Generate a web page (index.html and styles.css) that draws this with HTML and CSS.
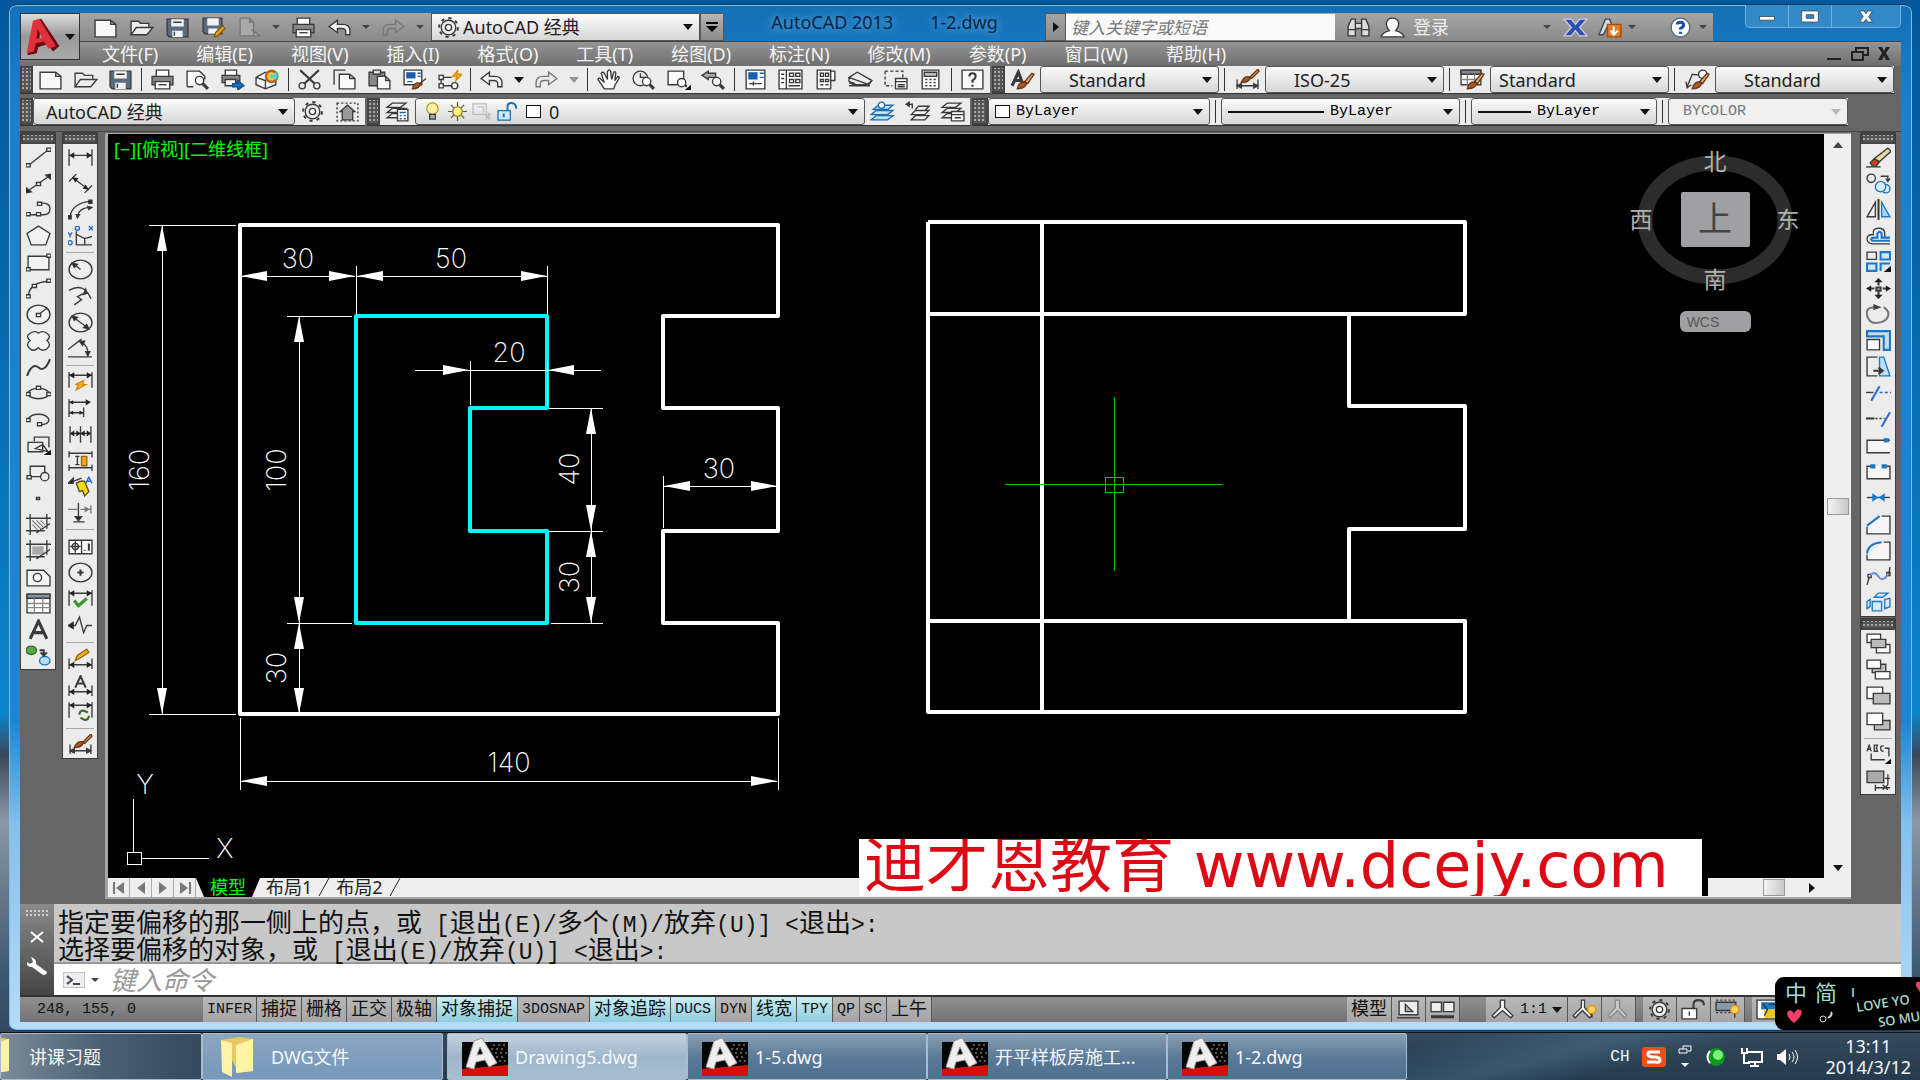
FILE: index.html
```html
<!DOCTYPE html>
<html lang="zh-CN">
<head>
    <meta charset="UTF-8">
    <title>AutoCAD 2013 1-2.dwg</title>
    <link rel="stylesheet" href="styles.css">
</head>
<body>
<!-- 图标库 24x20 -->
<svg class="defs">
    <symbol id="new" viewBox="0 0 24 20"><path fill="#f8f8f8" d="M2 3h15l5 4v12H2zM17 3v4h5"/></symbol>
    <symbol id="open" viewBox="0 0 24 20"><path fill="#eee" d="M2 17V4h7l2 2h8v3M2 17l5-7h16l-6 7z"/></symbol>
    <symbol id="save" viewBox="0 0 24 20"><path fill="#5b6b80" d="M2 2h20v17H4l-2-2z"/><path fill="#f2f2f2" stroke="none" d="M6 2h12v7H6zM7 13h10v6H7z"/><path d="M9 14v4M8 5h8"/></symbol>
    <symbol id="saveas" viewBox="0 0 24 20"><path fill="#5b6b80" d="M2 1h18v15H4l-2-2z"/><path fill="#f2f2f2" stroke="none" d="M6 1h11v7H6zM7 11h9v5H7z"/><path fill="#f3a81c" stroke="#8a5a10" d="M13 19l1-4 7-7 2 3-7 7z"/></symbol>
    <symbol id="etran" viewBox="0 0 24 20"><g stroke="#777"><path fill="#aaa" d="M3 1h9l4 4v13H3zM12 1v4h4M14 12l8 6h-9"/></g></symbol>
    <symbol id="print" viewBox="0 0 24 20"><path fill="#fff" d="M6 7V1h12v6"/><path fill="#888" d="M2 7h20v8H2z"/><path fill="#fff" d="M5 12h14v7H5z"/><path d="M8 15h8"/></symbol>
    <symbol id="preview" viewBox="0 0 24 20"><path fill="#fafafa" d="M2 17V2h12l5 5v3M2 17h6"/><circle fill="#fff" cx="14" cy="11" r="4"/><path stroke-width="3" d="M17 14l5 5"/></symbol>
    <symbol id="publish" viewBox="0 0 24 20"><path fill="#fff" d="M5 6V1h11v5"/><path fill="#888" d="M2 6h17v7H2z"/><path fill="#fff" d="M5 10h10v6H5z"/><path fill="#1372c4" stroke="#0a4f90" d="M12 14h5v-3l6 5-6 4v-3h-5z"/></symbol>
    <symbol id="dwf" viewBox="0 0 24 20"><path fill="#f4f4f4" d="M1 8l9-5 10 4v8l-10 4-9-4zM1 8l9 3v8M10 11l10-4"/><circle cx="16" cy="7" r="6" fill="#6cc" stroke="#5a4"/><path stroke="#d64a1c" stroke-width="2" d="M19 3a5 5 0 1 0 1 7"/><path stroke="#f6cd21" stroke-width="2" d="M18 5a3 3 0 1 0 0 4"/></symbol>
    <symbol id="cut" viewBox="0 0 24 20"><path stroke-width="2" d="M3 1l14 13M21 1L7 14"/><circle cx="5" cy="16" r="3"/><circle cx="19" cy="16" r="3"/></symbol>
    <symbol id="copyclip" viewBox="0 0 24 20"><path d="M2 15V1h11"/><path fill="#fafafa" d="M7 5h10l5 4v10H7zM17 5v4h5"/></symbol>
    <symbol id="paste" viewBox="0 0 24 20"><path fill="#888" d="M2 3h15v13H2z"/><path fill="#ddd" d="M6 1h7v4H6z"/><path fill="#fafafa" d="M10 7h8l4 4v8H10zM18 7v4h4"/></symbol>
    <symbol id="match" viewBox="0 0 24 20"><path fill="#fff" d="M2 1h17v14H2z"/><path fill="#1a5fae" stroke="none" d="M4 3h9v6H4z"/><path stroke="#1a5fae" d="M15 4h3M15 7h3M5 12h5"/><path fill="#a55a26" stroke="#6b3512" d="M10 19c1-5 4-7 8-5-1 3-3 5-8 5zM17 14l6-5"/></symbol>
    <symbol id="blockedit" viewBox="0 0 24 20"><path d="M4 16V8h10M4 16h12"/><path fill="#fff" d="M2 14h4v4H2zM2 6h4v4H2z"/><circle fill="#fff" cx="17" cy="16" r="3"/><path fill="#f7b51d" stroke="#d98b06" d="M15 7l5-6-1 4h5l-6 6 1-4z"/></symbol>
    <symbol id="undo" viewBox="0 0 24 20"><path fill="#f4f4f4" d="M2 9l8-6v4h5q7 0 7 6v4h-4v-3q0-3-4-3h-4v4z"/></symbol>
    <symbol id="redo" viewBox="0 0 24 20"><path stroke="#777" d="M22 9l-8-6v4H9q-7 0-7 6v4h4v-3q0-3 4-3h4v4z"/></symbol>
    <symbol id="pan" viewBox="0 0 24 20"><path fill="#fff" d="M8 19l-6-9q0-2 2-1l4 4L5 4q1-2 3 0l3 6V2q2-2 3 0l1 8 2-7q2-1 2 1l-1 7 3-4q2 0 1 2l-4 7-1 3z"/></symbol>
    <symbol id="zoomrt" viewBox="0 0 24 20"><circle cx="9" cy="9" r="7"/><path d="M9 4v4h5"/><circle fill="#fff" cx="15" cy="12" r="4"/><path stroke-width="3" d="M18 15l4 4"/></symbol>
    <symbol id="zoomwin" viewBox="0 0 24 20"><path fill="#fafafa" d="M2 2h15v13H2z"/><circle fill="#fff" cx="15" cy="13" r="4"/><path stroke-width="2" d="M18 15l2 2"/><path fill="#111" stroke="none" d="M24 15v5h-6z"/></symbol>
    <symbol id="zoomprev" viewBox="0 0 24 20"><path fill="#aaa" d="M1 6l6-4v2h7v4H7v2z"/><circle fill="#fff" cx="15" cy="12" r="4"/><path stroke-width="3" d="M18 15l4 4"/></symbol>
    <symbol id="props" viewBox="0 0 24 20"><path fill="#fff" d="M3 1h18v18H3z"/><path fill="#1a5fae" stroke="none" d="M5 3h9v7H5z"/><path stroke="#1a5fae" d="M16 4h4M16 8h4"/><path d="M6 14h12M10 12v4"/></symbol>
    <symbol id="dcenter" viewBox="0 0 24 20"><path fill="#fff" d="M1 1h22v18H1zM8 1v18"/><path d="M3 5h3M3 9h3M3 13h3M11 4h4v3h-4zM17 4h4v3h-4zM11 10h4v3h-4zM17 10h4v3h-4zM10 16h11"/></symbol>
    <symbol id="palettes" viewBox="0 0 24 20"><path fill="#fff" d="M4 1h13v18H4zM17 2h4v9h-4M7 4h3v3H7zM12 4h3v3h-3zM7 10h3v2H7zM12 10h3v2h-3zM7 15h3M12 15h3"/></symbol>
    <symbol id="sheet" viewBox="0 0 24 20"><path fill="#eee" d="M1 8l8-5 14 8-3 4-8-3zM1 13l5 2h12l4-3M1 8v4l6 2M1 16h20"/></symbol>
    <symbol id="markup" viewBox="0 0 24 20"><path stroke-dasharray="3 2" d="M2 2h17v7M2 2v14h7"/><path fill="#fff" d="M12 9h11v10H12zM12 12h11M14 15h7M14 17h7"/></symbol>
    <symbol id="calc" viewBox="0 0 24 20"><path fill="#fff" d="M4 1h16v18H4z"/><path fill="#bbb" d="M6 3h12v4H6z"/><path stroke-dasharray="2 2" d="M7 10h11M7 13h11M7 16h11"/></symbol>
    <symbol id="qmark" viewBox="0 0 24 20"><path fill="#fafafa" d="M2 1h20v18H2z"/><path stroke-width="2" d="M9 7q0-3 3-3t3 3q0 2-3 4v2M12 15v2"/></symbol>
    <symbol id="brush" viewBox="0 0 24 20"><path fill="#a55a26" stroke="#6b3512" d="M7 19c1-5 4-8 9-6 0 3-3 6-9 6z"/><path fill="#d9a66b" stroke="#6b3512" d="M14 12l7-8 2 1-6 9z"/></symbol>
    <symbol id="textstyle" viewBox="0 0 24 20"><path stroke-width="3" d="M2 16L8 3l5 13M4 11h8"/><use href="#brush"/></symbol>
    <symbol id="dimstyle" viewBox="0 0 24 20"><path d="M2 10v9M22 10v9M2 16h20M2 16l4-2v4zM22 16l-4-2v4z"/><path fill="#a55a26" stroke="#6b3512" d="M6 13c2-5 5-7 9-5-1 3-3 5-9 5z"/><path fill="#d9a66b" stroke="#6b3512" d="M14 8l8-8 1 2-7 7z"/></symbol>
    <symbol id="tabstyle" viewBox="0 0 24 20"><path fill="#fff" d="M1 1h19v14H1z"/><path fill="#789" d="M1 1h19v4H1z"/><path stroke="#888" d="M1 10h19M7 5v10M14 5v10"/><use href="#brush"/></symbol>
    <symbol id="mlstyle" viewBox="0 0 24 20"><path d="M2 17l5-12 9 1M1 12l1 6 4-3"/><circle fill="#fff" cx="17" cy="5" r="4"/><use href="#brush"/></symbol>
    <symbol id="gear" viewBox="0 0 24 20"><circle cx="12" cy="10" r="7" fill="#eee"/><circle cx="12" cy="10" r="9" stroke-width="2" stroke-dasharray="3 4"/><circle cx="12" cy="10" r="3" fill="#fff"/></symbol>
    <symbol id="house" viewBox="0 0 24 20"><path stroke-dasharray="2 2" d="M2 2h20v17H2z"/><path fill="#999" d="M5 10l7-6 7 6h-2v8H7v-8z"/></symbol>
    <symbol id="layers" viewBox="0 0 24 20"><path fill="#f4f4f4" d="M2 16l5-4h13l-5 4zM2 11l5-4h13l-5 4zM2 6l5-4h13l-5 4z"/></symbol>
    <symbol id="layprop" viewBox="0 0 24 20"><use href="#layers"/><path fill="#fff" d="M12 8h10v11H12z"/><path stroke="#1a5fae" d="M14 11h6M14 14h2M14 17h2M18 14h2M18 17h2"/></symbol>
    <symbol id="laycur" viewBox="0 0 24 20"><g stroke="#1a6fae"><path fill="#bfe0f7" d="M1 18l5-4h16l-5 4zM1 13l5-4h16l-5 4zM3 8l5-4h14l-5 4z"/><circle fill="#fff" cx="11" cy="4" r="3"/></g></symbol>
    <symbol id="layprev" viewBox="0 0 24 20"><path fill="#f4f4f4" d="M6 18l4-4h13l-4 4zM6 13l4-4h13l-4 4zM10 8l3-3h10l-4 4"/><path d="M1 3h6v4M1 3l3-2v4z"/></symbol>
    <symbol id="laystate" viewBox="0 0 24 20"><use href="#layers"/><path fill="#fff" d="M11 10h12v9H11z"/><path d="M11 13h12M14 16h6"/></symbol>
    <symbol id="bulb" viewBox="0 0 24 20"><circle fill="#fff3a0" stroke="#b09030" cx="12" cy="7" r="6"/><path fill="#aaa" d="M9 13h6v5H9z"/></symbol>
    <symbol id="sun" viewBox="0 0 24 20"><path stroke="#665a20" d="M12 0v20M2 10h20M5 3l14 14M19 3L5 17"/><circle fill="#fff08a" stroke="#8a7a20" cx="12" cy="10" r="5"/></symbol>
    <symbol id="vpfreeze" viewBox="0 0 24 20"><path stroke="#bbb" d="M2 2h14v11H2zM6 5h7v6M14 13l7 5M21 12l-6 6M18 11v8"/></symbol>
    <symbol id="lock" viewBox="0 0 24 20"><path stroke="#1a6fae" fill="#cfe8f8" d="M2 9h13v10H2z"/><path stroke="#1a6fae" stroke-width="2" d="M12 9V5q0-4 4-4t5 4v2M8 12v4"/></symbol>

    <!-- 绘图 -->
    <symbol id="line" viewBox="0 0 24 20"><path d="M2 18L22 2"/><path fill="#fff" d="M0 16h4v3H0zM20 1h4v3h-4z"/></symbol>
    <symbol id="xline" viewBox="0 0 24 20"><path d="M2 17L22 3"/><path fill="#222" d="M0 19v-5l5 4zM24 1v5l-5-4z"/><path fill="#fff" d="M10 9h4v3h-4z"/></symbol>
    <symbol id="pline" viewBox="0 0 24 20"><path d="M2 15h15q6 0 6-6t-10-5"/><path fill="#fff" d="M0 13h4v3H0zM10 13h4v3h-4zM11 3h4v3h-4z"/></symbol>
    <symbol id="polygon" viewBox="0 0 24 20"><path fill="#f2f2f2" d="M12 1l11 7-4 11H5L1 8z"/></symbol>
    <symbol id="rect" viewBox="0 0 24 20"><path fill="#f2f2f2" d="M2 4h20v13H2z"/><path fill="#fff" d="M0 15h4v3H0zM20 2h4v3h-4z"/></symbol>
    <symbol id="arc" viewBox="0 0 24 20"><path d="M2 18Q3 4 22 3"/><path fill="#fff" d="M0 16h4v3H0zM6 6h4v3H6zM20 1h4v3h-4z"/></symbol>
    <symbol id="circle" viewBox="0 0 24 20"><ellipse fill="#f2f2f2" cx="12" cy="10" rx="11" ry="9"/><path d="M12 10l8-6"/><path fill="#fff" d="M10 9h4v3h-4z"/></symbol>
    <symbol id="cloud" viewBox="0 0 24 20"><path fill="#f2f2f2" d="M4 10Q-1 6 4 3q5-3 8 0 4-3 8 0 5 3 0 7 5 4 0 8-5 3-8-1-4 4-8 1-5-4 0-8z"/></symbol>
    <symbol id="spline" viewBox="0 0 24 20"><path stroke-width="2" d="M1 18Q6 5 12 10t11-8"/></symbol>
    <symbol id="ellipse" viewBox="0 0 24 20"><ellipse cx="12" cy="10" rx="10" ry="5"/><path fill="#fff" d="M0 9h4v3H0zM20 9h4v3h-4zM10 3h4v3h-4z"/></symbol>
    <symbol id="elarc" viewBox="0 0 24 20"><path d="M2 10q2-5 10-5t10 5q0 5-9 5"/><path fill="#fff" d="M0 9h4v3H0zM11 13h4v3h-4z"/></symbol>
    <symbol id="insert" viewBox="0 0 24 20"><path d="M8 6V2h14v10"/><path fill="#eee" d="M2 7h14v9H2zM9 13l7-4 5 7z"/><path fill="#111" stroke="none" d="M24 14v5h-7z"/></symbol>
    <symbol id="block" viewBox="0 0 24 20"><path fill="#eee" d="M4 4h14v10H4z"/><circle fill="#eee" cx="18" cy="14" r="4"/><path fill="#fff" d="M1 13h4v3H1z"/></symbol>
    <symbol id="point" viewBox="0 0 24 20"><path d="M10 9h3v2h-3z"/></symbol>
    <symbol id="hatch" viewBox="0 0 24 20"><path d="M4 0v20M20 0v14M0 4h24M0 16h18M10 18l13-9"/><path stroke="#777" stroke-width="1" d="M6 6l9 9M6 10l5 5M10 6l7 7M14 6l4 4"/></symbol>
    <symbol id="gradient" viewBox="0 0 24 20"><path fill="#aaa" stroke="none" d="M6 6h11v8H6z"/><path d="M4 0v20M20 0v14M0 4h24M0 16h18M10 18l13-9"/></symbol>
    <symbol id="region" viewBox="0 0 24 20"><path fill="#f4f4f4" d="M1 3h16l6 6v9H1z"/><circle cx="11" cy="10" r="4"/></symbol>
    <symbol id="table" viewBox="0 0 24 20"><path fill="#fff" d="M1 1h22v18H1z"/><path fill="#8090a0" d="M1 1h22v4H1z"/><path stroke="#888" d="M1 10h22M1 14h22M8 5v14M16 5v14"/></symbol>
    <symbol id="mtext" viewBox="0 0 24 20"><path stroke-width="3" d="M4 19L12 2l8 17M7 13h10"/></symbol>
    <symbol id="addsel" viewBox="0 0 24 20"><ellipse fill="#58a648" stroke="#2c6b22" cx="5" cy="5" rx="5" ry="4"/><ellipse fill="#b9def7" stroke="#2377b8" cx="18" cy="15" rx="5" ry="4"/><path stroke-width="2" d="M13 5h4v4M14 7l3 3 3-3"/></symbol>

    <!-- 标注 -->
    <symbol id="dimh" viewBox="0 0 24 20"><path d="M1 2v16M23 2v16M1 8h22"/><path fill="#222" stroke="none" d="M1 8l5-3v6zM23 8l-5-3v6z"/></symbol>
    <symbol id="dimb" viewBox="0 0 24 20"><path d="M1 10v10M23 10v10M1 16h22"/><path fill="#222" stroke="none" d="M1 16l5-3v6zM23 16l-5-3v6z"/></symbol>
    <symbol id="dimt" viewBox="0 0 24 20"><path d="M1 1v15M23 1v15M1 4h22"/><path fill="#222" stroke="none" d="M1 4l5-3v6zM23 4l-5-3v6z"/></symbol>
    <symbol id="dimali" viewBox="0 0 24 20"><path d="M4 4l16 12M8 1l-7 7M23 12l-7 7"/><path fill="#222" stroke="none" d="M4 4l6 1-3 4zM20 16l-6-1 3-4z"/></symbol>
    <symbol id="dimarc" viewBox="0 0 24 20"><path d="M2 18Q3 4 22 2M9 18Q10 8 22 8"/><path fill="#222" d="M0 16h3v3H0zM20 1h3v3h-3zM19 7l4 1-3 2zM8 15h3l-2 3z"/></symbol>
    <symbol id="dimord" viewBox="0 0 24 20"><path d="M8 5v13h15M8 8l8 4 7-2M16 12v6"/><g stroke="#1a6fce"><circle cx="9" cy="2" r="2"/><circle cx="2" cy="16" r="2"/><path d="M0 6l2 3 2-3M2 9v2M20 0l4 4M24 0l-4 4"/></g></symbol>
    <symbol id="dimrad" viewBox="0 0 24 20"><ellipse fill="#eee" cx="12" cy="10" rx="11" ry="9"/><path d="M12 10L6 5"/><path fill="#222" d="M4 4l5 1-3 3z"/></symbol>
    <symbol id="dimjog" viewBox="0 0 24 20"><path d="M1 5q14-8 21 8M6 19l7-5-4-3 8-4"/><path fill="#222" d="M17 4l-2 5 3-1z"/></symbol>
    <symbol id="dimdia" viewBox="0 0 24 20"><ellipse fill="#eee" cx="12" cy="10" rx="11" ry="9"/><path d="M5 5l14 10"/><path fill="#222" d="M4 4l5 1-3 3zM20 16l-5-1 3-3z"/></symbol>
    <symbol id="dimang" viewBox="0 0 24 20"><path d="M0 18h23M0 11L13 1M13 4q7 4 6 13"/><path fill="#222" d="M11 3l5 0-2 4zM19 17l-2-4h4z"/></symbol>
    <symbol id="qdim" viewBox="0 0 24 20"><use href="#dimt"/><path fill="#f7b51d" stroke="#d98b06" d="M8 18l2-5H7l8-4-1 4h3z"/></symbol>
    <symbol id="dimbase" viewBox="0 0 24 20"><path d="M1 2v17M1 5h20M1 15h14M15 10v9"/><path fill="#222" stroke="none" d="M22 5l-5-3v6zM1 5l4-2v4zM1 15l4-2v4zM15 15l-4-2v4z"/></symbol>
    <symbol id="dimcont" viewBox="0 0 24 20"><path d="M2 2v16M12 2v16M22 2v16M2 9h20"/><path fill="#222" stroke="none" d="M2 9l4-3v6zM12 9L8 6v6zM12 9l4-3v6zM22 9l-4-3v6z"/></symbol>
    <symbol id="dimspace" viewBox="0 0 24 20"><path d="M1 1v6M23 1v6M1 3h22M1 14v6M23 14v6M1 17h22M9 6v8M7 6h4M7 14h4"/><path fill="#f3a81c" stroke="#96650c" d="M13 6h5v9h-5z"/></symbol>
    <symbol id="dimbreak" viewBox="0 0 24 20"><path fill="#222" d="M0 7l5-5v5zM5 5l8-3"/><path fill="#f3d81c" stroke="#5a5206" d="M8 7q4-3 8-2l4 10-4 4-2-5-3 1z"/><path stroke="#1a6fce" d="M17 7l3-6 3 6M18 5h4"/></symbol>
    <symbol id="tol0" viewBox="0 0 24 20"><path stroke="#777" d="M0 6h9M12 6h10M22 2v8"/><path d="M10 0v15M5 18h11"/><path fill="#222" d="M10 17l-3-4h6z"/><path fill="#777" stroke="none" d="M21 6l-5-3v6z"/></symbol>
    <symbol id="tolerance" viewBox="0 0 24 20"><path fill="#fff" d="M1 4h22v13H1zM13 4v13M7 5v11M2 10h10"/><circle cx="7" cy="10" r="3"/><path stroke-width="2" d="M20 7v7M16 13v1"/></symbol>
    <symbol id="center" viewBox="0 0 24 20"><ellipse fill="#eee" cx="12" cy="10" rx="11" ry="9"/><path stroke-width="2" d="M12 7v6M9 10h6"/></symbol>
    <symbol id="inspect" viewBox="0 0 24 20"><use href="#dimt"/><path stroke="#3a9a28" stroke-width="3" d="M6 11l4 5 8-7"/></symbol>
    <symbol id="jogline" viewBox="0 0 24 20"><path d="M1 10h6l4-8 4 15 3-7h5"/><path fill="#222" d="M0 10l5-3v6z"/></symbol>
    <symbol id="dimedit" viewBox="0 0 24 20"><use href="#dimb"/><path fill="#f7b51d" stroke="#96650c" d="M7 12l2-5 9-6 2 3-9 6z"/></symbol>
    <symbol id="dimtedit" viewBox="0 0 24 20"><use href="#dimb"/><path stroke-width="2" d="M7 12l5-11 5 11M8 8h7"/></symbol>
    <symbol id="dimupd" viewBox="0 0 24 20"><use href="#dimt"/><path stroke="#3a6a28" stroke-width="2" d="M11 13q0-4 4-4l4 2M20 14q0 4-4 4l-4-2"/></symbol>

    <!-- 修改 -->
    <symbol id="erase" viewBox="0 0 24 20"><path d="M0 19h14"/><path fill="#c9421c" d="M4 15l4-4 5 3-3 4H6z"/><path fill="#e8d8a0" d="M8 11L21 1l3 3-11 10z"/></symbol>
    <symbol id="copy" viewBox="0 0 24 20"><circle cx="5" cy="5" r="4"/><path d="M14 3h7v4M19 5l2 3 2-3"/><g stroke="#1a78c8"><circle cx="19" cy="15" r="4"/><circle fill="#d7ecfa" cx="14" cy="13" r="5"/></g></symbol>
    <symbol id="mirror" viewBox="0 0 24 20"><path d="M9 3v14H1z"/><path stroke-width="2" d="M12 0v20"/><path fill="#a9d6f5" stroke="#1a78c8" d="M15 3v14h8z"/></symbol>
    <symbol id="offset" viewBox="0 0 24 20"><path d="M23 12h-5V8q0-5-6-5T7 9Q1 9 1 13t5 5h17"/><path stroke="#1a78c8" stroke-width="2" d="M23 15H6q-3-3 3-3h2V8q2-3 4 0v4h8"/></symbol>
    <symbol id="array" viewBox="0 0 24 20"><path d="M1 1h9v7H1z"/><path fill="#cfe8f8" stroke="#1a78c8" stroke-width="2" d="M14 1h9v7h-9zM1 12h9v7H1zM14 19v-7h9"/><path fill="#111" stroke="none" d="M24 14v6h-7z"/></symbol>
    <symbol id="move" viewBox="0 0 24 20"><path stroke-width="2" d="M12 3v4M12 13v4M4 10h4M16 10h4M10 9h4v3h-4z"/><path fill="#222" stroke="none" d="M12 0l4 4H8zM12 20l4-4H8zM0 10l5-3v6zM24 10l-5-3v6z"/></symbol>
    <symbol id="rotate" viewBox="0 0 24 20"><path stroke="#777" stroke-width="2" d="M17 3q6 4 4 9t-10 6-10-7 8-8"/><path fill="#444" stroke="none" d="M7 0l8 3-8 3z"/></symbol>
    <symbol id="scale" viewBox="0 0 24 20"><path fill="#bfe0f7" stroke="#1a78c8" stroke-width="2" d="M1 6V1h22v18h-6V6z"/><path fill="#fff" d="M1 9h12v10H1z"/></symbol>
    <symbol id="stretch" viewBox="0 0 24 20"><path d="M11 1H1v18h10"/><path fill="#bfe0f7" stroke="#1a78c8" d="M13 19V1h4l6 18z"/><path stroke-width="2" d="M7 14h8M12 11l4 3-4 3"/></symbol>
    <symbol id="trim" viewBox="0 0 24 20"><path d="M0 9h7"/><path stroke="#2a6fd0" stroke-width="2" d="M5 17l8-14"/><path stroke="#2a6fd0" stroke-dasharray="3 2" d="M13 9h11"/></symbol>
    <symbol id="extend" viewBox="0 0 24 20"><path stroke-width="2" d="M0 9h8"/><path stroke="#2a6fd0" stroke-width="2" d="M15 17l8-14"/><path stroke-dasharray="2 2" d="M9 9h9"/></symbol>
    <symbol id="breakat" viewBox="0 0 24 20"><path fill="#f6f6f6" d="M23 5H1v12h22"/><path fill="#1a78c8" stroke="none" d="M17 3h5v4h-5z"/></symbol>
    <symbol id="break" viewBox="0 0 24 20"><path fill="#f6f6f6" d="M7 5H1v12h22V5h-6"/><path fill="#1a78c8" stroke="none" d="M4 3h5v4H4zM15 3h5v4h-5z"/></symbol>
    <symbol id="join" viewBox="0 0 24 20"><path d="M1 10h22"/><path fill="#1a78c8" stroke="none" d="M6 6l6 4-6 4zM18 6l-6 4 6 4z"/></symbol>
    <symbol id="chamfer" viewBox="0 0 24 20"><path fill="#f6f6f6" d="M15 2h8v17H1v-7"/><path stroke="#1a78c8" stroke-width="2" d="M1 11L13 2"/></symbol>
    <symbol id="fillet" viewBox="0 0 24 20"><path fill="#f6f6f6" d="M17 2h6v17H1v-5"/><path stroke="#1a78c8" stroke-width="2" d="M1 13Q2 3 15 2"/></symbol>
    <symbol id="blend" viewBox="0 0 24 20"><path d="M1 18l2-7M22 8l1-7M2 8h3v3H2zM20 6h3v3h-3z"/><path stroke="#6a8fd8" stroke-width="2" d="M4 9q4-5 8 1t9-2"/></symbol>
    <symbol id="explode" viewBox="0 0 24 20"><path fill="#d7ecfa" stroke="#1a78c8" d="M6 9h9v9H6zM8 5l4-4h9l-5 4zM18 7l5-1v8l-5 2zM1 9l3-2v7l-3 2z"/></symbol>
    <symbol id="ord1" viewBox="0 0 24 20"><path fill="#fff" d="M1 1h13v8H1zM10 11h13v8H10z"/><path fill="#bbb" d="M5 6h14v8H5z"/></symbol>
    <symbol id="ord2" viewBox="0 0 24 20"><path fill="#bbb" d="M6 5h13v8H6z"/><path fill="#fff" d="M1 1h13v8H1zM9 12h14v7H9z"/></symbol>
    <symbol id="ord3" viewBox="0 0 24 20"><path fill="#fff" d="M1 2h15v11H1z"/><path fill="#bbb" d="M7 8h16v10H7z"/></symbol>
    <symbol id="ord4" viewBox="0 0 24 20"><path fill="#bbb" d="M8 9h15v9H8z"/><path fill="#fff" d="M1 2h15v11H1z"/></symbol>
    <symbol id="ordtext" viewBox="0 0 24 20"><path d="M1 7l2-6 2 6M2 5h3M8 1v6h3l-1-3 1-3zM17 2q-3-1-3 2t3 3M18 4h4v8M5 9v6h13"/><path fill="#111" stroke="none" d="M24 14v5h-6z"/></symbol>
    <symbol id="ordhatch" viewBox="0 0 24 20"><path fill="#aaa" d="M1 1h16v11H1z"/><path d="M18 8h5M21 4v10M9 17h14M9 14v6M16 14l5 5M21 14l-5 5"/></symbol>
    <symbol id="acad" viewBox="0 0 46 38"><path fill="#050505" stroke="none" d="M0 4h46v34H0z"/><path fill="#d80d0d" stroke="none" d="M0 38v-7l46-4v11z"/><path stroke="#aaa" stroke-dasharray="2 3" d="M31 7h12M29 11h15M33 15h12M34 19h10M37 23h8"/><path fill="#eee" fill-rule="evenodd" stroke="#999" d="M4 29L12 3l8-3 15 25-8 4-4-7-9 2-2 7zM15 17l6-1-3-7z"/></symbol>
    <symbol id="folder" viewBox="0 0 34 40"><path fill="#e8c860" stroke="none" d="M0 3l18-3 14 2v32l-14 2z"/><path fill="#fff3a8" stroke="none" d="M0 3l11 3v34L1 35zM15 8l17-6v32l-17 2z"/></symbol>
</svg>

<div class="window">
    <header class="head">
        <button class="app-btn" title="AutoCAD">
            <svg viewBox="0 0 44 42"><path fill="#6d0a10" fill-rule="evenodd" d="M5 41L12 4l8-3 20 30-7 6-6-8-10 3-2 7zM18 24l6-2-5-8z"/><path fill="#e2303a" fill-rule="evenodd" d="M4 39L11 3l7-2 18 30-8 3-5-8-9 2-2 9zM15 23l6-1-5-10z"/></svg>
            <i class="caret"></i>
        </button>
        <div class="title-row">
            <div class="qat">
                <button title="新建"><svg class="ic"><use href="#new"/></svg></button>
                <button title="打开"><svg class="ic"><use href="#open"/></svg></button>
                <button title="保存"><svg class="ic"><use href="#save"/></svg></button>
                <button title="另存为"><svg class="ic"><use href="#saveas"/></svg></button>
                <button title="传递"><svg class="ic"><use href="#etran"/></svg></button>
                <i class="caret dim"></i>
                <button title="打印"><svg class="ic"><use href="#print"/></svg></button>
                <button title="放弃"><svg class="ic"><use href="#undo"/></svg></button>
                <i class="caret dim"></i>
                <button title="重做"><svg class="ic"><use href="#redo"/></svg></button>
                <i class="caret dim"></i>
            </div>
            <div class="combo ws-top">
                <svg class="ic"><use href="#gear"/></svg>
                <select aria-label="工作空间"><option>AutoCAD 经典</option></select>
            </div>
            <button class="qat-more" title="自定义"><svg viewBox="0 0 12 10"><path d="M0 0h12v2H0zM0 4h12l-6 6z"/></svg></button>
            <h1><span>AutoCAD 2013</span><span>1-2.dwg</span></h1>
            <div class="info">
                <button class="info-arrow" title="展开"><i class="caret right"></i></button>
                <input type="text" placeholder="键入关键字或短语" aria-label="搜索">
                <button title="搜索"><svg class="ic" viewBox="0 0 24 20"><path fill="#ddd" d="M2 18V9l3-7h4v16zM15 18V2h4l3 7v9zM9 6h6v5H9zM2 12h7M15 12h7"/></svg></button>
                <button class="login"><svg class="ic" viewBox="0 0 24 20"><path fill="#fff" d="M1 19q1-4 8-6-3-3-3-7 1-5 6-5t6 5q0 4-3 7 7 2 8 6z"/></svg>登录</button>
                <i class="caret dim"></i>
                <button title="Exchange"><svg class="ic" viewBox="0 0 24 20"><path fill="#2c4fae" stroke="#ccd" d="M1 2h7l4 5 4-5h7l-7 8 7 8h-7l-4-5-4 5H1l7-8z"/></svg></button>
                <button title="Autodesk 360"><svg class="ic" viewBox="0 0 24 20"><path fill="#cde" stroke="#445" d="M2 17L8 2h4l5 12-4 1-3-6-4 8z"/><path fill="#e8781c" stroke="#a34c06" d="M10 7h13v12H10z"/><path stroke="#fff" stroke-width="2" d="M16 9v7M13 13l3 4 4-4"/></svg></button>
                <i class="caret dim"></i>
                <button class="help" title="帮助"><svg class="ic" viewBox="0 0 24 20"><circle cx="12" cy="10" r="9" fill="#fff" stroke="#567"/><path stroke="#1a4fae" stroke-width="3" d="M9 7q0-2 3-2t3 3q0 1-3 3v1M12 14v2"/></svg></button>
                <i class="caret dim"></i>
            </div>
            <div class="win-ctl">
                <button title="最小化"><svg viewBox="0 0 20 14"><path d="M2 7h16v4H2z"/></svg></button>
                <button title="最大化"><svg viewBox="0 0 20 14"><path fill-rule="evenodd" d="M1 1h18v12H1zM6 5v4h8V5z"/></svg></button>
                <button title="关闭"><svg viewBox="0 0 20 14"><path d="M3 1h5l2 3 2-3h5l-4 6 4 6h-5l-2-3-2 3H3l4-6z"/></svg></button>
            </div>
        </div>
        <nav class="menu">
            <a href="#">文件(F)</a><a href="#">编辑(E)</a><a href="#">视图(V)</a><a href="#">插入(I)</a><a href="#">格式(O)</a><a href="#">工具(T)</a><a href="#">绘图(D)</a><a href="#">标注(N)</a><a href="#">修改(M)</a><a href="#">参数(P)</a><a href="#">窗口(W)</a><a href="#">帮助(H)</a>
            <svg class="mdi" viewBox="0 0 66 16"><path d="M0 12h14v2H0z"/><path fill="none" stroke="#222" stroke-width="2" d="M29 5V2h12v7h-4M25 6h11v8H25z"/><path d="M51 1h4l2 4 2-4h4l-4 6 4 7h-4l-2-4-2 4h-4l4-7z"/></svg>
        </nav>
    </header>

    <div class="rows">
        <div class="row">
            <div class="bar">
                <i class="grip"></i>
                <button title="新建"><svg class="ic"><use href="#new"/></svg></button>
                <button title="打开"><svg class="ic"><use href="#open"/></svg></button>
                <button title="保存"><svg class="ic"><use href="#save"/></svg></button>
                <i class="sep"></i>
                <button title="打印"><svg class="ic"><use href="#print"/></svg></button>
                <button title="打印预览"><svg class="ic"><use href="#preview"/></svg></button>
                <button title="发布"><svg class="ic"><use href="#publish"/></svg></button>
                <button title="3DDWF"><svg class="ic"><use href="#dwf"/></svg></button>
                <i class="sep"></i>
                <button title="剪切"><svg class="ic"><use href="#cut"/></svg></button>
                <button title="复制"><svg class="ic"><use href="#copyclip"/></svg></button>
                <button title="粘贴"><svg class="ic"><use href="#paste"/></svg></button>
                <button title="特性匹配"><svg class="ic"><use href="#match"/></svg></button>
                <button title="块编辑器"><svg class="ic"><use href="#blockedit"/></svg></button>
                <i class="sep"></i>
                <button title="放弃"><svg class="ic"><use href="#undo"/></svg></button>
                <i class="caret slot"></i>
                <button title="重做"><svg class="ic"><use href="#redo"/></svg></button>
                <i class="caret slot off"></i>
                <i class="sep"></i>
                <button title="平移"><svg class="ic"><use href="#pan"/></svg></button>
                <button title="实时缩放"><svg class="ic"><use href="#zoomrt"/></svg></button>
                <button title="窗口缩放"><svg class="ic"><use href="#zoomwin"/></svg></button>
                <button title="缩放上一个"><svg class="ic"><use href="#zoomprev"/></svg></button>
                <i class="sep"></i>
                <button title="特性"><svg class="ic"><use href="#props"/></svg></button>
                <button title="设计中心"><svg class="ic"><use href="#dcenter"/></svg></button>
                <button title="工具选项板"><svg class="ic"><use href="#palettes"/></svg></button>
                <button title="图纸集"><svg class="ic"><use href="#sheet"/></svg></button>
                <button title="标记集"><svg class="ic"><use href="#markup"/></svg></button>
                <button title="计算器"><svg class="ic"><use href="#calc"/></svg></button>
                <i class="sep"></i>
                <button title="帮助"><svg class="ic"><use href="#qmark"/></svg></button>
            </div>
            <div class="bar styles">
                <i class="grip"></i>
                <button title="文字样式"><svg class="ic"><use href="#textstyle"/></svg></button>
                <div class="combo in-lg"><select aria-label="文字样式"><option>Standard</option></select></div>
                <i class="sep"></i>
                <button title="标注样式"><svg class="ic"><use href="#dimstyle"/></svg></button>
                <div class="combo in-lg"><select aria-label="标注样式"><option>ISO-25</option></select></div>
                <i class="sep"></i>
                <button title="表格样式"><svg class="ic"><use href="#tabstyle"/></svg></button>
                <div class="combo"><select aria-label="表格样式"><option>Standard</option></select></div>
                <i class="sep"></i>
                <button title="多重引线样式"><svg class="ic"><use href="#mlstyle"/></svg></button>
                <div class="combo in-lg"><select aria-label="多重引线样式"><option>Standard</option></select></div>
            </div>
        </div>
        <div class="row">
            <div class="bar">
                <i class="grip"></i>
                <div class="combo ws"><select aria-label="工作空间"><option>AutoCAD 经典</option></select></div>
                <button title="工作空间设置"><svg class="ic"><use href="#gear"/></svg></button>
                <button title="我的工作空间"><svg class="ic"><use href="#house"/></svg></button>
            </div>
            <div class="bar">
                <i class="grip"></i>
                <button title="图层特性"><svg class="ic"><use href="#layprop"/></svg></button>
                <div class="combo layer">
                    <svg class="ic"><use href="#bulb"/></svg><svg class="ic"><use href="#sun"/></svg><svg class="ic"><use href="#vpfreeze"/></svg><svg class="ic"><use href="#lock"/></svg><i class="swatch"></i>
                    <select aria-label="图层"><option>0</option></select>
                </div>
                <button title="置为当前"><svg class="ic"><use href="#laycur"/></svg></button>
                <button title="上一个图层"><svg class="ic"><use href="#layprev"/></svg></button>
                <button title="图层状态"><svg class="ic"><use href="#laystate"/></svg></button>
            </div>
            <div class="bar mono">
                <i class="grip"></i>
                <div class="combo color"><i class="swatch"></i><select aria-label="颜色"><option>ByLayer</option></select></div>
                <i class="sep"></i>
                <div class="combo ltype"><i class="rule"></i><select aria-label="线型"><option>ByLayer</option></select></div>
                <i class="sep"></i>
                <div class="combo lweight"><i class="rule"></i><select aria-label="线宽"><option>ByLayer</option></select></div>
                <i class="sep"></i>
                <div class="combo plot"><select aria-label="打印样式" disabled><option>BYCOLOR</option></select></div>
            </div>
        </div>
    </div>

    <main class="stage">
        <aside class="tools draw">
            <i class="grip"></i>
            <button title="直线"><svg class="ic"><use href="#line"/></svg></button>
            <button title="构造线"><svg class="ic"><use href="#xline"/></svg></button>
            <button title="多段线"><svg class="ic"><use href="#pline"/></svg></button>
            <button title="多边形"><svg class="ic"><use href="#polygon"/></svg></button>
            <button title="矩形"><svg class="ic"><use href="#rect"/></svg></button>
            <button title="圆弧"><svg class="ic"><use href="#arc"/></svg></button>
            <button title="圆"><svg class="ic"><use href="#circle"/></svg></button>
            <button title="修订云线"><svg class="ic"><use href="#cloud"/></svg></button>
            <button title="样条曲线"><svg class="ic"><use href="#spline"/></svg></button>
            <button title="椭圆"><svg class="ic"><use href="#ellipse"/></svg></button>
            <button title="椭圆弧"><svg class="ic"><use href="#elarc"/></svg></button>
            <button title="插入块"><svg class="ic"><use href="#insert"/></svg></button>
            <button title="创建块"><svg class="ic"><use href="#block"/></svg></button>
            <button title="点"><svg class="ic"><use href="#point"/></svg></button>
            <button title="图案填充"><svg class="ic"><use href="#hatch"/></svg></button>
            <button title="渐变色"><svg class="ic"><use href="#gradient"/></svg></button>
            <button title="面域"><svg class="ic"><use href="#region"/></svg></button>
            <button title="表格"><svg class="ic"><use href="#table"/></svg></button>
            <button title="多行文字"><svg class="ic"><use href="#mtext"/></svg></button>
            <button title="添加选定对象"><svg class="ic"><use href="#addsel"/></svg></button>
        </aside>
        <aside class="tools dims">
            <i class="grip"></i>
            <button title="线性"><svg class="ic"><use href="#dimh"/></svg></button>
            <button title="对齐"><svg class="ic"><use href="#dimali"/></svg></button>
            <button title="弧长"><svg class="ic"><use href="#dimarc"/></svg></button>
            <button title="坐标"><svg class="ic"><use href="#dimord"/></svg></button>
            <i class="hsep"></i>
            <button title="半径"><svg class="ic"><use href="#dimrad"/></svg></button>
            <button title="折弯"><svg class="ic"><use href="#dimjog"/></svg></button>
            <button title="直径"><svg class="ic"><use href="#dimdia"/></svg></button>
            <button title="角度"><svg class="ic"><use href="#dimang"/></svg></button>
            <i class="hsep"></i>
            <button title="快速标注"><svg class="ic"><use href="#qdim"/></svg></button>
            <button title="基线"><svg class="ic"><use href="#dimbase"/></svg></button>
            <button title="连续"><svg class="ic"><use href="#dimcont"/></svg></button>
            <button title="等距标注"><svg class="ic"><use href="#dimspace"/></svg></button>
            <button title="折断标注"><svg class="ic"><use href="#dimbreak"/></svg></button>
            <button title="公差"><svg class="ic"><use href="#tol0"/></svg></button>
            <i class="hsep"></i>
            <button title="形位公差"><svg class="ic"><use href="#tolerance"/></svg></button>
            <button title="圆心标记"><svg class="ic"><use href="#center"/></svg></button>
            <button title="检验"><svg class="ic"><use href="#inspect"/></svg></button>
            <button title="折弯线性"><svg class="ic"><use href="#jogline"/></svg></button>
            <i class="hsep"></i>
            <button title="编辑标注"><svg class="ic"><use href="#dimedit"/></svg></button>
            <button title="编辑标注文字"><svg class="ic"><use href="#dimtedit"/></svg></button>
            <button title="标注更新"><svg class="ic"><use href="#dimupd"/></svg></button>
            <i class="hsep"></i>
            <button title="标注样式"><svg class="ic"><use href="#dimstyle"/></svg></button>
        </aside>

        <section class="doc">
            <div class="view">
                <svg class="drawing" viewBox="108 134 1716 744" preserveAspectRatio="xMinYMin meet">
                    <defs>
                        <marker id="arr" viewBox="0 0 26 10" refX="26" refY="5" markerWidth="26" markerHeight="10" markerUnits="userSpaceOnUse" orient="auto-start-reverse"><path fill="#fff" d="M0 0v10l26-5z"/></marker>
                    </defs>
                    <text class="vp" x="114" y="156">[−][俯视][二维线框]</text>
                    <!-- 左图 -->
                    <path class="thick" d="M240 225H778V316H663V408H778V531H663V623H778V714H240z"/>
                    <path class="thick cyan" d="M356 316H547V408H470V531H547V623H356z"/>
                    <g class="thin">
                        <path d="M149 225H236M149 714H236M356 266V314M547 266V314M287 316H352M287 623H352M470 361V405M549 408H603M549 531H603M551 623H603M663 476V528M240 718V790M778 718V790M415 370H601M547 361V405"/>
                        <g marker-start="url(#arr)" marker-end="url(#arr)">
                            <path d="M162 225V714"/><path d="M241 276H355"/><path d="M357 276H547"/><path d="M299 316V623"/><path d="M299 623V714"/><path d="M591 408V531"/><path d="M591 531V623"/><path d="M664 486H777"/><path d="M241 781H777"/>
                        </g>
                        <path marker-end="url(#arr)" d="M415 370H469"/><path marker-end="url(#arr)" d="M601 370H548"/>
                    </g>
                    <g class="num">
                        <text x="298" y="268">30</text><text x="451" y="268">50</text><text x="509" y="362">20</text><text x="719" y="478">30</text><text x="509" y="772">140</text>
                        <text transform="translate(149 470) rotate(-90)">160</text>
                        <text transform="translate(286 470) rotate(-90)">100</text>
                        <text transform="translate(286 668) rotate(-90)">30</text>
                        <text transform="translate(579 469) rotate(-90)">40</text>
                        <text transform="translate(579 577) rotate(-90)">30</text>
                        <text x="145" y="794">Y</text><text x="225" y="858">X</text>
                    </g>
                    <!-- 右图 -->
                    <path class="thick" d="M928 222H1465V314H928M928 222V712H1465V621H928M1042 222V712M1349 314V406H1465V529H1349V621"/>
                    <path class="thin" d="M133 799V852M127 852H141V864H127zM141 858H209"/>
                    <path class="cross" d="M1005 484H1223M1114 397V571M1105 477H1123V492H1105z"/>
                    <g class="cube">
                        <ellipse cx="1715" cy="220" rx="70" ry="57"/>
                        <rect x="1681" y="192" width="69" height="55" rx="2"/>
                        <rect x="1680" y="311" width="71" height="21" rx="6"/>
                        <text x="1715" y="170">北</text><text x="1715" y="288">南</text><text x="1641" y="228">西</text><text x="1788" y="228">东</text>
                        <text class="top" x="1715" y="231">上</text>
                        <text class="wcs" x="1703" y="327">WCS</text>
                    </g>
                </svg>
                <div class="vscroll"><i class="caret up"></i><i class="thumb"></i><i class="caret"></i></div>
            </div>
            <div class="tabs">
                <button title="首页"><svg viewBox="0 0 16 12"><path d="M2 0h2v12H2zM13 0v12L5 6z"/></svg></button>
                <button title="上一页"><svg viewBox="0 0 16 12"><path d="M12 0v12L4 6z"/></svg></button>
                <button title="下一页"><svg viewBox="0 0 16 12"><path d="M4 0v12l8-6z"/></svg></button>
                <button title="末页"><svg viewBox="0 0 16 12"><path d="M3 0v12l8-6zM12 0h2v12h-2z"/></svg></button>
                <a class="on" href="#">模型</a>
                <a href="#">布局1</a><svg class="slash" viewBox="0 0 12 18"><path d="M1 18L11 0"/></svg>
                <a href="#">布局2</a><svg class="slash" viewBox="0 0 12 18"><path d="M1 18L11 0"/></svg>
                <div class="hscroll"><i class="thumb"></i><i class="caret right"></i></div>
            </div>
            <div class="banner">迪才恩教育 www.dcejy.com</div>
        </section>

        <div class="dock">
            <aside class="tools modify">
                <i class="grip"></i>
                <button title="删除"><svg class="ic"><use href="#erase"/></svg></button>
                <button title="复制"><svg class="ic"><use href="#copy"/></svg></button>
                <button title="镜像"><svg class="ic"><use href="#mirror"/></svg></button>
                <button title="偏移"><svg class="ic"><use href="#offset"/></svg></button>
                <button title="阵列"><svg class="ic"><use href="#array"/></svg></button>
                <button title="移动"><svg class="ic"><use href="#move"/></svg></button>
                <button title="旋转"><svg class="ic"><use href="#rotate"/></svg></button>
                <button title="缩放"><svg class="ic"><use href="#scale"/></svg></button>
                <button title="拉伸"><svg class="ic"><use href="#stretch"/></svg></button>
                <button title="修剪"><svg class="ic"><use href="#trim"/></svg></button>
                <button title="延伸"><svg class="ic"><use href="#extend"/></svg></button>
                <button title="打断于点"><svg class="ic"><use href="#breakat"/></svg></button>
                <button title="打断"><svg class="ic"><use href="#break"/></svg></button>
                <button title="合并"><svg class="ic"><use href="#join"/></svg></button>
                <button title="倒角"><svg class="ic"><use href="#chamfer"/></svg></button>
                <button title="圆角"><svg class="ic"><use href="#fillet"/></svg></button>
                <button title="光顺曲线"><svg class="ic"><use href="#blend"/></svg></button>
                <button title="分解"><svg class="ic"><use href="#explode"/></svg></button>
            </aside>
            <aside class="tools order">
                <i class="grip"></i>
                <button title="前置"><svg class="ic"><use href="#ord1"/></svg></button>
                <button title="后置"><svg class="ic"><use href="#ord2"/></svg></button>
                <button title="置于对象之上"><svg class="ic"><use href="#ord3"/></svg></button>
                <button title="置于对象之下"><svg class="ic"><use href="#ord4"/></svg></button>
                <i class="hsep"></i>
                <button title="文字前置"><svg class="ic"><use href="#ordtext"/></svg></button>
                <button title="填充后置"><svg class="ic"><use href="#ordhatch"/></svg></button>
            </aside>
        </div>
    </main>

    <section class="cmd">
        <div class="cmd-side">
            <i class="dots"></i>
            <svg viewBox="0 0 14 12"><path stroke="#fff" stroke-width="2" d="M1 1l12 10M13 1L1 11"/></svg>
            <svg class="wrench" viewBox="0 0 22 18"><path fill="#fff" d="M1 5q-1 5 5 5l11 8q4 0 4-3L10 7q1-5-5-7l2 5-3 2z"/></svg>
        </div>
        <div class="cmd-main">
            <div class="log">
                <p>指定要偏移的那一侧上的点，或<span> [</span>退出<span>(E)/</span>多个<span>(M)/</span>放弃<span>(U)] &lt;</span>退出<span>&gt;:</span></p>
                <p>选择要偏移的对象，或<span> [</span>退出<span>(E)/</span>放弃<span>(U)] &lt;</span>退出<span>&gt;:</span></p>
            </div>
            <div class="entry">
                <svg viewBox="0 0 22 16"><path fill="#eee" stroke="#999" d="M0 0h22v16H0z"/><path fill="none" stroke="#445" stroke-width="2" d="M4 4l5 4-5 4M10 12h7"/></svg>
                <i class="caret dim"></i>
                <input type="text" placeholder="键入命令" aria-label="命令">
            </div>
        </div>
    </section>

    <footer class="status">
        <span class="coords">248, 155, 0</span>
        <button>INFER</button><button class="cn">捕捉</button><button class="cn">栅格</button><button class="cn">正交</button><button class="cn">极轴</button><button class="cn on">对象捕捉</button><button>3DOSNAP</button><button class="cn on">对象追踪</button><button class="on">DUCS</button><button>DYN</button><button class="cn on">线宽</button><button class="on">TPY</button><button>QP</button><button>SC</button><button class="cn">上午</button>
        <div class="st-right">
            <button class="cn">模型</button>
            <button class="sq" title="布局"><svg class="ic" viewBox="0 0 24 20"><path fill="#eee" d="M3 2h18v13H3zM9 5v7h7z"/><path d="M1 18h22"/></svg></button>
            <button class="sq" title="快速查看"><svg class="ic" viewBox="0 0 24 20"><path fill="#eee" d="M1 3h10v9H1zM13 3h10v9H13z"/><path stroke-width="3" d="M1 17h22"/></svg></button>
            <i class="gap"></i>
            <button class="scale"><svg class="ic" viewBox="0 0 24 20"><path fill="#fff" d="M10 1h4v7l8 8-2 2-8-7-8 7-2-2 8-8z"/></svg>1:1<i class="caret"></i></button>
            <button class="sq" title="注释可见"><svg class="ic" viewBox="0 0 24 20"><path fill="#fff" d="M9 1h3v7l7 8-2 2-7-7-7 7-2-2 8-8z"/><circle cx="19" cy="10" r="4" fill="#ffd35a" stroke="#e08a10"/><path d="M19 14v4"/></svg></button>
            <button class="sq" title="自动缩放"><svg class="ic" viewBox="0 0 24 20"><path fill="#ccc" stroke="#888" d="M9 1h4v7l7 8-2 2-7-7-7 7-2-2 7-8z"/></svg></button>
            <i class="gap s"></i>
            <button class="sq" title="切换工作空间"><svg class="ic"><use href="#gear"/></svg></button>
            <button class="sq" title="锁定"><svg class="ic" viewBox="0 0 24 20"><path fill="#fff" d="M1 9h14v10H1zM8 12v4"/><path stroke-width="2" d="M12 9V5q0-4 5-4t5 5"/></svg></button>
            <button class="sq" title="硬件加速"><svg class="ic" viewBox="0 0 24 20"><path fill="#89a" d="M1 3h19v8H1z"/><path stroke-dasharray="2 2" d="M1 13h18M1 1h18"/><circle cx="19" cy="10" r="4" fill="#ffd35a" stroke="#e08a10"/><path d="M19 14v4"/></svg></button>
            <i class="gap s"></i>
            <button class="last" title="图形性能"><svg class="ic" viewBox="0 0 24 20"><path fill="#fff" d="M1 1h22v18H1z"/><path fill="#1a78c8" stroke="none" d="M5 3h17v7H5z"/><path fill="#e8c81c" stroke="none" d="M8 10h14v8H8z"/><path d="M6 4l5 6-3 6M12 5h7v6"/></svg></button>
        </div>
    </footer>
</div>

<footer class="taskbar">
    <button class="dark"><svg class="half" viewBox="24 0 10 40"><use href="#folder" width="34" height="40"/></svg>讲课习题</button>
    <button class="dir"><svg class="fold"><use href="#folder"/></svg>DWG文件</button>
    <button class="cad active"><svg><use href="#acad"/></svg>Drawing5.dwg</button>
    <button class="cad"><svg><use href="#acad"/></svg>1-5.dwg</button>
    <button class="cad"><svg><use href="#acad"/></svg>开平样板房施工...</button>
    <button class="cad"><svg><use href="#acad"/></svg>1-2.dwg</button>
    <div class="tray">
        <span class="lang">CH</span>
        <svg viewBox="0 0 24 20"><rect width="24" height="20" rx="3" fill="#e8501c"/><path fill="none" stroke="#fff" stroke-width="3" d="M18 5H9q-4 0-3 3 1 2 6 2 6 0 6 3t-4 2H5"/></svg>
        <svg class="chev" viewBox="0 0 14 24"><path fill="none" stroke="#fff" d="M5 4V1h8v5h-3M1 4h8v4H1z"/><path fill="#fff" d="M3 18h8l-4 4z"/></svg>
        <svg viewBox="0 0 24 20"><circle cx="12" cy="10" r="9" fill="#0d9a1c"/><circle cx="14" cy="8" r="5" fill="#7df07a"/><path fill="none" stroke="#fff" stroke-width="2" d="M6 4q-5 6 0 12"/></svg>
        <svg viewBox="0 0 24 20"><path fill="none" stroke="#fff" stroke-width="2" d="M8 5h14v10H8M15 15v4M10 19h9M2 1v5h5V1M4 6v10h6"/></svg>
        <svg viewBox="0 0 24 20"><path fill="#fff" d="M1 7h3l6-5v16l-6-5H1z"/><path fill="none" stroke="#fff" stroke-width="1" d="M13 7q2 3 0 6M16 5q4 5 0 10M19 3q5 7 0 14"/></svg>
        <time>13:11<br>2014/3/12</time>
    </div>
</footer>

<div class="ime">
    <svg viewBox="0 0 145 53">
        <text class="cn" x="10" y="24">中</text><text class="cn" x="40" y="24">简</text>
        <path fill="#f0406a" d="M19 46q-9-7-6-12 4-2 6 3 2-6 7-4 3 5-7 13z"/>
        <circle cx="48" cy="42" r="3" fill="none" stroke="#cde"/><path fill="none" stroke="#cde" stroke-width="2" d="M56 35q2 3-3 6"/>
        <g class="love"><text x="76" y="20">I</text><text transform="translate(82 35) rotate(-9)">LOVE YO</text><text transform="translate(104 50) rotate(-9)">SO MU</text></g>
        <path fill="#f0406a" d="M145 5q-5-1-4 4l4 6z"/>
    </svg>
</div>
</body>
</html>
```
FILE: styles.css
```css
*{
    margin:0;
    padding:0;
    box-sizing: border-box;
}
body,html{
    height: 100%;
    overflow: hidden;
}
body{
    display: flex;
    flex-direction: column;
    position: relative;
    font: 18px/20px "Noto Sans","Noto Sans CJK SC",sans-serif;
    color: #222;
    background: linear-gradient(#03579b,#0669ae 30%,#0a84cd 66%,#3a4858 70%,#8b98a5 76%,#3f5870 90%,#2a3c50);
}
button,input,select{
    font: inherit;
    color: inherit;
    border: 0;
    background: none;
    outline: none;
}
a{
    color: inherit;
    text-decoration: none;
}
i{
    display: block;
    flex: none;
}
svg{
    display: block;
    flex: none;
}
.defs{
    position: absolute;
    width:0;
    height:0;
}
.ic{
    width:25px;
    height:21px;
    fill: none;
    stroke: #3a3a3a;
    stroke-width: 1.3;
}
.caret{
    width:0;
    height:0;
    border: 5px solid transparent;
    border-top: 6px solid #111;
    border-bottom: 0;
}
.caret.dim{
    border-width: 4px 4px 0;
    border-top-color: #444;
}
.caret.right{
    border: 5px solid transparent;
    border-left: 6px solid #111;
    border-right: 0;
}
.caret.up{
    border-top: 0;
    border-bottom: 6px solid #444;
}

/* 窗口 */
.window{
    flex: 1;
    min-height: 0;
    display: flex;
    flex-direction: column;
    margin: 4px 8px 1px 9px;
    padding: 8px 11px;
    border: 1px solid #0c3a63;
    border-width: 1px 0;
    border-radius: 8px;
    background: linear-gradient(#1470b6,#1b7fcb 10%,#1d86d4 70%,#84c0ee 80%,#b5dcf6);
    box-shadow: inset 0 0 0 1px #7fc0ea;
}
.head{
    display: grid;
    grid-template: 28px 25px / 60px 1fr;
}
.app-btn{
    grid-area: 1 / 1 / 3 / 2;
    z-index: 1;
    height:47px;
    display: flex;
    align-items: center;
    justify-content: space-between;
    padding: 0 4px 0 2px;
    background: linear-gradient(#ddd,#999 50%,#aaa);
    border: 1px solid #333;
}
.app-btn svg{
    width:40px;
    height:42px;
}
.title-row{
    grid-area: 1 / 2;
    display: flex;
    align-items: stretch;
}
.qat{
    width:351px;
    padding-left: 7px;
    display: flex;
    align-items: center;
    background: linear-gradient(#a5a5a5,#8a8a8a);
}
.qat button{
    width:36px;
    display: grid;
    place-items: center;
}
.qat .caret{
    margin: 0 5px;
}
.combo{
    position: relative;
    display: flex;
    align-items: center;
    border: 1px solid #555;
    border-radius: 3px;
    background: linear-gradient(#fbfbfb,#d6d6d6);
}
.combo select{
    appearance: none;
    flex: 1;
    min-width: 0;
    height: 24px;
    padding: 0 20px 0 8px;
    opacity: 1;
    color: #222;
}
.combo::after{
    content: "";
    position: absolute;
    right:6px;
    top:50%;
    margin-top: -3px;
    border: 5px solid transparent;
    border-top: 6px solid #111;
    border-bottom: 0;
    pointer-events: none;
}
.combo .swatch{
    margin-left: 6px;
}
.swatch{
    width:15px;
    height:13px;
    background: #fff;
    border: 1px solid #111;
}
.ws-top{
    width:269px;
    padding-left: 4px;
    border-radius: 0;
}
.ws-top select{
    padding-left: 2px;
}
.qat-more{
    width:24px;
    display: grid;
    place-items: center;
    background: linear-gradient(#b5b5b5,#8a8a8a);
    border: 1px solid #555;
}
.qat-more svg{
    width:12px;
    height:10px;
}
h1{
    flex: 1;
    display: flex;
    justify-content: center;
    gap: 37px;
    font-size: 18px;
    line-height: 18px;
    font-weight: normal;
    color: #062544;
    text-shadow: 0 0 8px #7fc4f4;
}
.info{
    width:668px;
    display: flex;
    align-items: center;
    background: linear-gradient(#a5a5a5,#8a8a8a);
}
.info-arrow{
    width:21px;
    height:28px;
    padding-left: 7px;
    border: 1px solid #555;
}
.info input{
    width:269px;
    height:26px;
    padding: 0 5px;
    background: #fafafa;
    font-size: 17px;
    font-style: italic;
}
.info input::placeholder{
    color: #777;
    opacity: 1;
}
.info button + button,
.info input + button{
    margin-left: 9px;
}
.info input + button{
    padding: 0 0 0 2px;
}
.login{
    display: flex;
    align-items: center;
    gap: 8px;
    margin-right: auto;
    color: #eee;
}
.info > .caret{
    margin: 0 12px 0 6px;
}
.info > .caret:last-child{
    margin-right: 6px;
}
.info .help{
    margin-left: 20px;
}
.win-ctl{
    align-self: flex-start;
    display: flex;
    height:23px;
    margin: -8px 0 0 32px;
    border: 1px solid #6db2e0;
    border-top: 0;
    border-radius: 0 0 5px 5px;
    background: #3388c6;
}
.win-ctl button{
    width:43px;
    display: grid;
    place-items: center;
    border-right: 1px solid #6db2e0;
}
.win-ctl button:last-child{
    width:68px;
    border: 0;
}
.win-ctl svg{
    width:20px;
    height:13px;
    fill: #fff;
    stroke: #456;
}
.menu{
    grid-area: 2 / 1 / 3 / 3;
    display: flex;
    align-items: center;
    gap: 38px;
    padding-left: 82px;
    line-height: 18px;
    color: #f4f4f4;
    background: linear-gradient(#959595,#6e6e6e);
    border-top: 1px solid #444;
}
.mdi{
    width:66px;
    height:16px;
    margin: 0 8px 0 auto;
    fill: #222;
}

/* 工具栏 */
.rows{
    background: #666;
    border-bottom: 1px solid #444;
}
.row{
    display: flex;
    gap: 2px;
    height:28px;
    margin-bottom: 4px;
}
.row:last-child{
    margin-bottom: 5px;
}
.bar{
    display: flex;
    align-items: stretch;
    background: #ececec;
    border-bottom: 1px solid #333;
}
.bar > button{
    width:35px;
    display: grid;
    place-items: center;
}
.grip{
    background: radial-gradient(#aaa 30%,transparent 40%) 3px 2px/4px 4px #555;
    border: 2px solid #444;
}
.bar .grip{
    width:13px;
}
.sep{
    width:7px;
    border: solid transparent;
    border-width: 2px 3px;
    background: #333;
    background-clip: padding-box;
}
.slot{
    align-self: center;
    margin: 0 5px;
}
.off{
    opacity: .4;
}
.styles .combo{
    width:179px;
}
.styles .sep,.mono .sep{
    width:11px;
    border-width: 2px 5px;
}
.bar .in-lg select{
    padding-left: 28px;
}
.combo.ws{
    width:262px;
}
.ws select{
    padding-left: 12px;
}
.combo.layer{
    width:450px;
    padding-left: 4px;
}
.layer .ic{
    width:25px;
    height:19px;
}
.mono{
    font-family: "Liberation Mono",monospace;
    font-size: 15px;
}
.mono .grip{
    width:16px;
}
.mono .combo select{
    padding-left: 6px;
    color: #000;
}
.combo.color{
    width:222px;
}
.combo.ltype{
    width:239px;
}
.combo.lweight{
    width:186px;
}
.combo.plot{
    width:180px;
    background: #f0f0f0;
}
.combo.plot::after{
    opacity: .25;
}
.mono .combo.plot select{
    padding-left: 14px;
    color: #777;
}
.rule{
    width:96px;
    height:2px;
    margin-left: 6px;
    background: #111;
}
.lweight .rule{
    width:53px;
}

/* 主区域 */
.stage{
    flex: 1;
    min-height: 0;
    display: flex;
    align-items: flex-start;
    background: #666;
}
.tools{
    width:36px;
    display: flex;
    flex-direction: column;
    background: #ececec;
    border: 1px solid #3c3c3c;
}
.tools button{
    flex: 1;
    min-height: 0;
    display: grid;
    place-items: center;
}
.tools .grip{
    height:11px;
}
.hsep{
    height:7px;
    margin: 0 3px;
    border: solid #ececec;
    border-width: 3px 0;
    background: #aaa;
}
.draw{
    height:538px;
}
.dims{
    height:627px;
    margin-left: 6px;
}
.dock{
    width:50px;
    padding-left: 9px;
}
.modify{
    height:485px;
    margin-bottom: 1px;
}
.order{
    height:177px;
}
.doc{
    position: relative;
    flex: 1;
    min-width: 0;
    align-self: stretch;
    display: flex;
    flex-direction: column;
    margin: 1px 0 5px 7px;
    border: 2px solid #a5a5a5;
    border-width: 1px 0 2px 3px;
}
.view{
    flex: 1;
    min-height: 0;
    display: flex;
    background: #000;
}
.drawing{
    flex: 1;
    min-width: 0;
    height:100%;
}
.drawing path{
    fill: none;
}
.drawing marker path{
    fill: #fff;
    stroke: none;
}
.thick{
    stroke: #fff;
    stroke-width: 4;
    stroke-linejoin: round;
}
.thick.cyan{
    stroke: #00f6ff;
}
.thin{
    stroke: #fff;
    stroke-width: 1;
    shape-rendering: crispEdges;
}
.cross{
    stroke: #0c0;
    shape-rendering: crispEdges;
}
.vp{
    font-size: 18px;
    fill: #0f0;
}
.num{
    font: 200 27px Inter,sans-serif;
    fill: #fff;
    text-anchor: middle;
}
.cube{
    font-size: 23px;
    text-anchor: middle;
    fill: #b0b0b0;
}
.cube ellipse{
    fill: none;
    stroke: #2c2c2c;
    stroke-width: 15;
}
.cube rect{
    fill: #a0a0a2;
}
.cube .top{
    font-size: 34px;
    fill: #444;
}
.cube .wcs{
    font: 14px "Liberation Sans",sans-serif;
    fill: #555;
}
.vscroll{
    width:27px;
    padding: 8px 1px 7px;
    display: flex;
    flex-direction: column;
    align-items: center;
    justify-content: space-between;
    background: #efefef;
}
.thumb{
    width:22px;
    height:17px;
    background: linear-gradient(90deg,#f4f4f4,#c8c8c8);
    border: 1px solid #999;
}
.tabs{
    height:19px;
    display: flex;
    align-items: stretch;
    line-height: 18px;
    background: #efefef;
}
.tabs button{
    width:22px;
    display: grid;
    place-items: center;
    border-right: 1px solid #aaa;
}
.tabs button svg{
    width:16px;
    height:12px;
    fill: #777;
}
.tabs a{
    padding: 0 6px;
}
.tabs .on{
    padding: 0 14px;
    color: #0f0;
    background: #000;
    clip-path: polygon(0 0,100% 0,calc(100% - 8px) 100%,8px 100%);
}
.slash{
    width:12px;
    height:18px;
    stroke: #222;
}
.hscroll{
    display: flex;
    align-items: center;
    gap: 24px;
    margin: 0 36px 0 auto;
}
.banner{
    position: absolute;
    left:751px;
    right:143px;
    bottom:1px;
    height:57px;
    overflow: hidden;
    padding-left: 5px;
    font: 62px/53px "DejaVu Sans","Noto Sans CJK SC",sans-serif;
    white-space: nowrap;
    color: #dc0a14;
    background: #fff;
    border-right: 6px solid #000;
}

/* 命令行 */
.cmd{
    display: flex;
    height:91px;
}
.cmd-side{
    width:34px;
    display: flex;
    flex-direction: column;
    align-items: center;
    gap: 14px;
    padding-top: 5px;
    background: linear-gradient(#8a8a8a,#444);
}
.dots{
    width:24px;
    height:8px;
    background: radial-gradient(#ccc 30%,transparent 45%) 0 0/4px 4px;
}
.cmd-side svg{
    width:14px;
    height:12px;
}
.cmd-side .wrench{
    width:22px;
    height:18px;
}
.cmd-main{
    flex: 1;
    min-width: 0;
}
.log{
    height:60px;
    padding: 3px 4px 0;
    background: #c8c8c8;
    border-bottom: 2px solid #999;
    font: 26px/27px "Noto Sans CJK SC",sans-serif;
    color: #111;
    white-space: nowrap;
}
.log p{
    height:27px;
}
.log span{
    font: 23px/26px "Liberation Mono",monospace;
    white-space: pre;
}
.entry{
    height:31px;
    display: flex;
    align-items: center;
    gap: 6px;
    padding-left: 9px;
    background: #fff;
}
.entry svg{
    width:22px;
    height:16px;
}
.entry input{
    flex: 1;
    height:31px;
    padding-left: 5px;
    font-size: 26px;
    font-style: italic;
}
.entry input::placeholder{
    color: #999;
    opacity: 1;
}

/* 状态栏 */
.status{
    height:27px;
    display: flex;
    align-items: stretch;
    background: linear-gradient(#8f8f8f,#747474);
    border-top: 2px solid #333;
    font: 15px/22px "Liberation Mono","Noto Sans CJK SC",monospace;
    color: #111;
}
.coords{
    width:183px;
    padding: 2px 0 0 17px;
}
.status button{
    padding: 0 4px;
    background: linear-gradient(#b8b8b8,#a5a5a5);
    border-right: 1px solid #555;
    white-space: nowrap;
}
.status .cn{
    font-size: 18px;
}
.status .on{
    background: linear-gradient(#c9eef5,#8fcdda);
}
.st-right{
    display: flex;
    width:554px;
    margin-left: auto;
}
.status .sq{
    width:34px;
    padding: 0;
    display: grid;
    place-items: center;
}
.gap{
    width:26px;
}
.gap.s{
    width:7px;
}
.status .scale{
    width:82px;
    display: flex;
    align-items: center;
    gap: 5px;
}
.status .last{
    flex: 1;
}

/* 任务栏 */
.taskbar{
    height:48px;
    flex: none;
    display: flex;
    color: #f4f8fc;
    background: linear-gradient(165deg,transparent 70%,#5c86ab55 78%,transparent 84%),linear-gradient(#34495c,#253a4c);
    border-top: 1px solid #111;
}
.taskbar button{
    width:241px;
    display: flex;
    align-items: center;
    gap: 10px;
    padding: 0 12px 0 18px;
    background: linear-gradient(#8a9fb3,#5c7b98 50%,#4f6f90);
    border: 1px solid #a8bccd;
    border-radius: 2px;
    white-space: nowrap;
}
.taskbar .dark{
    width:202px;
    padding: 0;
    gap: 18px;
    background: linear-gradient(90deg,#7b8b98,#4b6073 50%,#34495c);
}
.taskbar .half{
    width:10px;
    height:40px;
}
.taskbar .dir{
    gap: 16px;
    margin-right: 4px;
    background: linear-gradient(#8ba6c0,#7698ba);
}
.fold{
    width:34px;
    height:40px;
}
.cad svg{
    width:46px;
    height:38px;
}
.taskbar .cad{
    width:240px;
    gap: 7px;
    padding-left: 14px;
}
.taskbar .active{
    background: linear-gradient(#c5d3df,#9fb6ca 50%,#a9bed0);
}
.tray{
    flex: 1;
    display: flex;
    align-items: center;
    justify-content: flex-end;
    gap: 12px;
    padding-right: 9px;
}
.tray svg{
    width:24px;
    height:20px;
}
.tray .chev{
    width:14px;
    height:24px;
}
.lang{
    font: 16px/20px "Liberation Mono",monospace;
}
.tray time{
    margin-left: 14px;
    text-align: center;
    line-height: 21px;
}

/* 输入法 */
.ime{
    position: absolute;
    right:0;
    bottom:50px;
    width:145px;
    height:53px;
    background: #000;
    border-radius: 9px 0 0 9px;
}
.ime .cn{
    font-size: 22px;
    fill: #9fdccc;
}
.love{
    font: 600 13px "Open Sans",sans-serif;
    fill: #a8d8cc;
}
```
